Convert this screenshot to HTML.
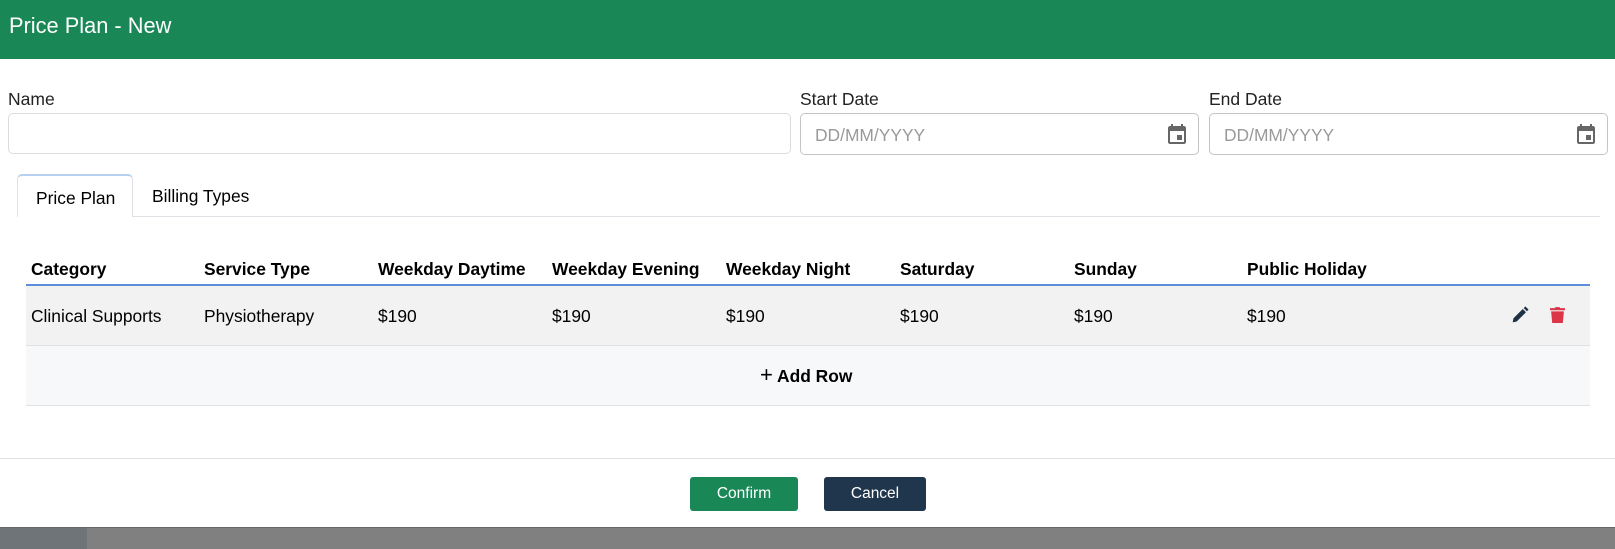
<!DOCTYPE html>
<html><head><style>
*{box-sizing:border-box;margin:0;padding:0}
body{width:1615px;height:549px;overflow:hidden;background:#fff;font-family:"Liberation Sans",sans-serif;color:#000;position:relative}
.abs{position:absolute}
.hdr{left:0;top:0;width:1615px;height:59px;background:#1a8856;color:#fff;font-size:21.8px;padding:13px 9px}
.lbl{font-size:17.5px;color:#222}
.inp{border:1px solid #dcdcdc;border-radius:5px;background:#fff}
.dinp{border:1px solid #c4c4c4;border-radius:5px;color:#9a9a9a;font-size:17.4px;padding:11px 14px}
.th{font-weight:bold;font-size:17.4px;top:259px}
.td{font-size:17.4px;top:306px}
.btn{color:#fff;font-size:15.5px;text-align:center;line-height:34px;border-radius:3px;top:477px;height:34px}
</style></head><body>
<div class="abs hdr">Price Plan - New</div>
<div class="abs lbl" style="left:8px;top:89px">Name</div>
<div class="abs inp" style="left:8px;top:113px;width:783px;height:41px"></div>
<div class="abs lbl" style="left:800px;top:89px">Start Date</div>
<div class="abs dinp" style="left:800px;top:113px;width:399px;height:42px">DD/MM/YYYY</div>
<div class="abs lbl" style="left:1209px;top:89px">End Date</div>
<div class="abs dinp" style="left:1209px;top:113px;width:399px;height:42px">DD/MM/YYYY</div>
<svg class="abs" style="left:1165px;top:122px" width="24" height="24" viewBox="0 0 24 24"><path fill="#666" d="M19 4h-1V2h-2v2H8V2H6v2H5c-1.1 0-2 .9-2 2v14c0 1.1.9 2 2 2h14c1.1 0 2-.9 2-2V6c0-1.1-.9-2-2-2zm0 16H5V9h14v11zm-7-7h5v5h-5z"/></svg>
<svg class="abs" style="left:1574px;top:122px" width="24" height="24" viewBox="0 0 24 24"><path fill="#666" d="M19 4h-1V2h-2v2H8V2H6v2H5c-1.1 0-2 .9-2 2v14c0 1.1.9 2 2 2h14c1.1 0 2-.9 2-2V6c0-1.1-.9-2-2-2zm0 16H5V9h14v11zm-7-7h5v5h-5z"/></svg>
<div class="abs" style="left:17px;top:216px;width:1583px;height:1px;background:#dee2e6"></div>
<div class="abs" style="left:17px;top:174px;width:116px;height:43px;border:1px solid #dee2e6;border-top:2px solid #b8d0f0;border-bottom:none;border-radius:5px 5px 0 0;background:#fff;font-size:17.4px;padding:12px 0 0 18px">Price Plan</div>
<div class="abs" style="left:152px;top:186px;font-size:17.4px">Billing Types</div>
<div class="abs th" style="left:31px">Category</div>
<div class="abs th" style="left:204px">Service Type</div>
<div class="abs th" style="left:378px">Weekday Daytime</div>
<div class="abs th" style="left:552px">Weekday Evening</div>
<div class="abs th" style="left:726px">Weekday Night</div>
<div class="abs th" style="left:900px">Saturday</div>
<div class="abs th" style="left:1074px">Sunday</div>
<div class="abs th" style="left:1247px">Public Holiday</div>
<div class="abs" style="left:26px;top:284px;width:1564px;height:2px;background:#5b8fdc"></div>
<div class="abs" style="left:26px;top:286px;width:1564px;height:59px;background:#f2f2f2"></div>
<div class="abs" style="left:26px;top:345px;width:1564px;height:1px;background:#dee2e6"></div>
<div class="abs" style="left:26px;top:346px;width:1564px;height:59px;background:#f7f8f9"></div>
<div class="abs" style="left:26px;top:405px;width:1564px;height:1px;background:#dee2e6"></div>
<div class="abs td" style="left:31px">Clinical Supports</div>
<div class="abs td" style="left:204px">Physiotherapy</div>
<div class="abs td" style="left:378px">$190</div>
<div class="abs td" style="left:552px">$190</div>
<div class="abs td" style="left:726px">$190</div>
<div class="abs td" style="left:900px">$190</div>
<div class="abs td" style="left:1074px">$190</div>
<div class="abs td" style="left:1247px">$190</div>
<svg class="abs" style="left:1511px;top:305px" width="19" height="19" viewBox="0 0 16 16"><path fill="#1e3246" d="M12.1 1.2l2.7 2.7-1.4 1.4-2.7-2.7zM9.9 3.4l2.7 2.7-7.8 7.8-3.4.7.7-3.4z"/></svg>
<svg class="abs" style="left:1550px;top:306px" width="15" height="17" viewBox="0 0 14 16"><path fill="#dc3545" d="M0 2h4.5l.5-1h4l.5 1H14v2H0zM1 5h12l-1 11H2z"/></svg>
<div class="abs" style="left:760px;top:366px;font-size:17.4px;font-weight:bold"><span style="font-size:22px;line-height:16px;font-weight:normal">+</span> Add Row</div>
<div class="abs" style="left:0;top:458px;width:1615px;height:1px;background:#dee2e6"></div>
<div class="abs btn" style="left:690px;width:108px;background:#1a8856">Confirm</div>
<div class="abs btn" style="left:824px;width:102px;background:#1f364c">Cancel</div>
<div class="abs" style="left:0;top:527px;width:1615px;height:22px;background:#808080;border-top:1px solid #666"></div>
<div class="abs" style="left:0;top:528px;width:87px;height:21px;background:#6f7478"></div>
</body></html>
